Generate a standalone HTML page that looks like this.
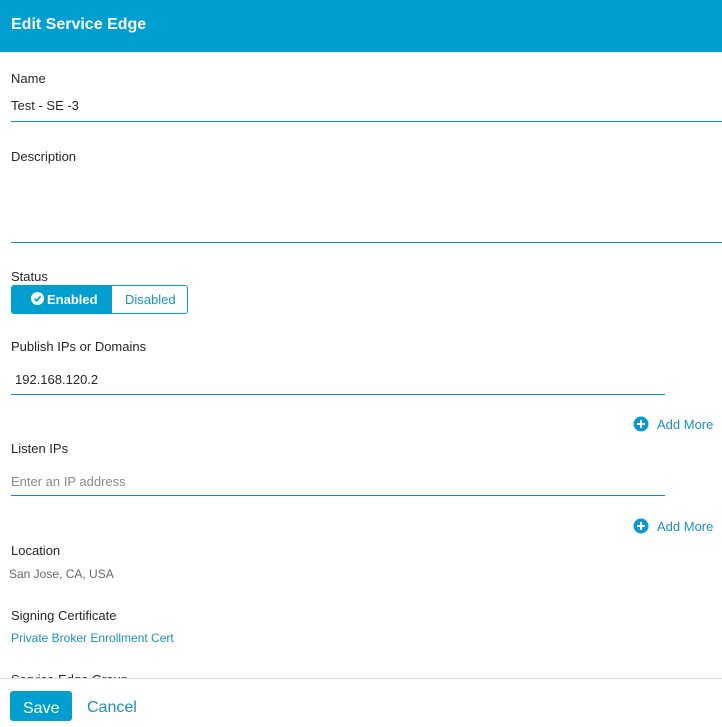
<!DOCTYPE html>
<html><head><style>
body{margin:0;width:722px;height:726px;position:relative;overflow:hidden;background:#fff;font-family:"Liberation Sans",sans-serif;color:#262626}
.a{position:absolute;white-space:nowrap}
.h{left:0;top:0;width:722px;height:52px;background:#009fd0}
.lbl{font-size:13px;color:#262626}
.line{position:absolute;height:1px;background:#0a8fc0}
.blue{color:#1b8fc6}
</style></head><body>
<div class="a h"></div>
<div class="a" style="left:11px;top:16px;font-size:16px;font-weight:bold;color:#fff">Edit Service Edge</div>
<div class="a lbl" style="left:11px;top:71px">Name</div>
<div class="a" style="left:11px;top:98px;font-size:13px">Test - SE -3</div>
<div class="line" style="left:11px;top:121px;width:711px"></div>
<div class="a lbl" style="left:11px;top:149px">Description</div>
<div class="line" style="left:11px;top:242px;width:711px"></div>
<div class="a lbl" style="left:11px;top:269px">Status</div>
<div class="a" style="left:11px;top:285px;width:175px;height:27px;border:1px solid #009fd0;border-radius:3px;overflow:hidden">
 <div class="a" style="left:0;top:0;width:100px;height:27px;background:#009fd0"></div>
 <div class="a" style="left:19px;top:6px;width:13px;height:13px;border-radius:50%;background:#fff"></div>
 <svg class="a" style="left:19px;top:6px" width="13" height="13" viewBox="0 0 13 13"><path d="M3.5 6.8l2 2 4-4.3" stroke="#009fd0" stroke-width="1.8" fill="none"/></svg>
 <div class="a" style="left:35px;top:6px;font-size:13px;font-weight:bold;color:#fff">Enabled</div>
 <div class="a" style="left:113px;top:6px;font-size:13px;color:#1b8fc6">Disabled</div>
</div>
<div class="a lbl" style="left:11px;top:339px">Publish IPs or Domains</div>
<div class="a" style="left:15px;top:372px;font-size:13px">192.168.120.2</div>
<div class="line" style="left:11px;top:394px;width:654px"></div>
<svg class="a" style="left:633px;top:416px" width="16" height="16" viewBox="0 0 16 16"><circle cx="8" cy="8" r="7.5" fill="#0a9ad0"/><path d="M8 4v8M4 8h8" stroke="#fff" stroke-width="2"/></svg>
<div class="a blue" style="left:657px;top:417px;font-size:13px">Add More</div>
<div class="a lbl" style="left:11px;top:441px">Listen IPs</div>
<div class="a" style="left:11px;top:474px;font-size:13px;color:#8a8a8a">Enter an IP address</div>
<div class="line" style="left:11px;top:495px;width:654px"></div>
<svg class="a" style="left:633px;top:518px" width="16" height="16" viewBox="0 0 16 16"><circle cx="8" cy="8" r="7.5" fill="#0a9ad0"/><path d="M8 4v8M4 8h8" stroke="#fff" stroke-width="2"/></svg>
<div class="a blue" style="left:657px;top:519px;font-size:13px">Add More</div>
<div class="a lbl" style="left:11px;top:543px">Location</div>
<div class="a" style="left:9px;top:567px;font-size:12px;color:#666">San Jose, CA, USA</div>
<div class="a lbl" style="left:11px;top:608px">Signing Certificate</div>
<div class="a blue" style="left:11px;top:631px;font-size:12px">Private Broker Enrollment Cert</div>
<div class="a lbl" style="left:11px;top:672px">Service Edge Group</div>
<div class="a" style="left:0;top:678px;width:722px;height:48px;background:#fff;border-top:1px solid #ddd"></div>
<div class="a" style="left:10px;top:691px;width:62px;height:30px;background:#009fd0;border-radius:3px"></div>
<div class="a" style="left:23px;top:700px;font-size:16px;color:#fff">Save</div>
<div class="a blue" style="left:87px;top:699px;font-size:16px">Cancel</div>
</body></html>
